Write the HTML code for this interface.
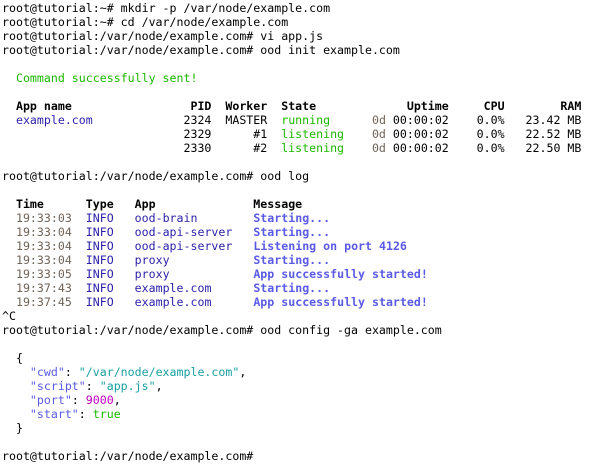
<!DOCTYPE html>
<html><head><meta charset="utf-8"><style>
html,body{margin:0;padding:0;background:#fff;width:600px;height:465px;overflow:hidden}
pre{margin:0;padding:1px 0 0 2px;font-family:"DejaVu Sans Mono","Liberation Mono",monospace;font-size:11.6px;line-height:14px;color:#000}
.g{color:#1cb800}.b{color:#2a1fa8}.d{color:#6e6358}.m{color:#5a5ae6;font-weight:bold}.k{color:#5a5ae6}.s{color:#17a0a0}.n{color:#c000c0}.h{font-weight:bold}
</style></head><body><pre>root@tutorial:~# mkdir -p /var/node/example.com
root@tutorial:~# cd /var/node/example.com
root@tutorial:/var/node/example.com# vi app.js
root@tutorial:/var/node/example.com# ood init example.com

  <span class="g">Command successfully sent!</span>

  <span class="h">App name                 PID  Worker  State             Uptime     CPU        RAM</span>
  <span class="b">example.com</span>             2324  MASTER  <span class="g">running</span>      <span class="d">0d</span> 00:00:02    0.0%   23.42 MB
                          2329      #1  <span class="g">listening</span>    <span class="d">0d</span> 00:00:02    0.0%   22.52 MB
                          2330      #2  <span class="g">listening</span>    <span class="d">0d</span> 00:00:02    0.0%   22.50 MB

root@tutorial:/var/node/example.com# ood log

  <span class="h">Time      Type   App              Message</span>
  <span class="d">19:33:03</span>  <span class="b">INFO</span>   <span class="b">ood-brain</span>        <span class="m">Starting...</span>
  <span class="d">19:33:04</span>  <span class="b">INFO</span>   <span class="b">ood-api-server</span>   <span class="m">Starting...</span>
  <span class="d">19:33:04</span>  <span class="b">INFO</span>   <span class="b">ood-api-server</span>   <span class="m">Listening on port 4126</span>
  <span class="d">19:33:04</span>  <span class="b">INFO</span>   <span class="b">proxy</span>            <span class="m">Starting...</span>
  <span class="d">19:33:05</span>  <span class="b">INFO</span>   <span class="b">proxy</span>            <span class="m">App successfully started!</span>
  <span class="d">19:37:43</span>  <span class="b">INFO</span>   <span class="b">example.com</span>      <span class="m">Starting...</span>
  <span class="d">19:37:45</span>  <span class="b">INFO</span>   <span class="b">example.com</span>      <span class="m">App successfully started!</span>
^C
root@tutorial:/var/node/example.com# ood config -ga example.com

  {
    <span class="k">"cwd"</span>: <span class="s">"/var/node/example.com"</span>,
    <span class="k">"script"</span>: <span class="s">"app.js"</span>,
    <span class="k">"port"</span>: <span class="n">9000</span>,
    <span class="k">"start"</span>: <span class="g">true</span>
  }

root@tutorial:/var/node/example.com#</pre></body></html>
